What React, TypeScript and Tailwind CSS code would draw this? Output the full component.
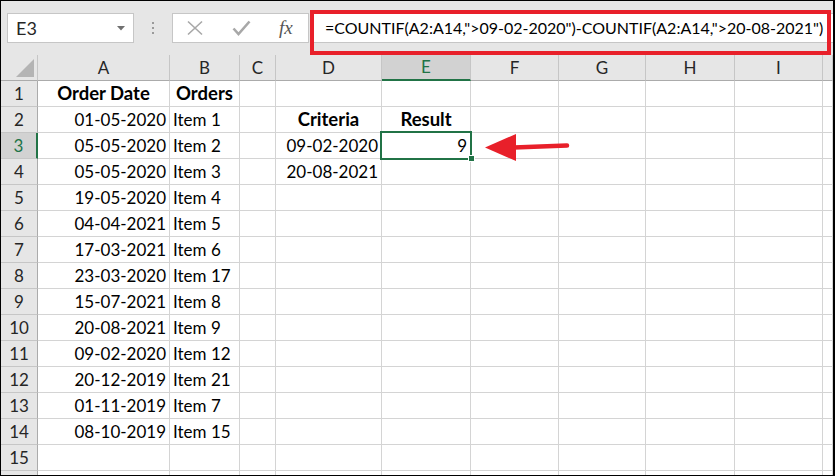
import React from "react";

const COLS = [
  "w-[37px]",
  "w-[132px]",
  "w-[70px]",
  "w-[36px]",
  "w-[106px]",
  "w-[89px]",
  "w-[88px]",
  "w-[87px]",
  "w-[89px]",
  "w-[88px]",
  "flex-1",
];
const LETTERS = ["A", "B", "C", "D", "E", "F", "G", "H", "I", ""];

type Cell = { t: string; b?: boolean; a?: "l" | "c" | "r" };

const ROWS: Record<number, Record<number, Cell>> = {
  1: { 1: { t: "Order Date", b: true, a: "c" }, 2: { t: "Orders", b: true, a: "c" } },
  2: { 1: { t: "01-05-2020", a: "r" }, 2: { t: "Item 1" }, 4: { t: "Criteria", b: true, a: "c" }, 5: { t: "Result", b: true, a: "c" } },
  3: { 1: { t: "05-05-2020", a: "r" }, 2: { t: "Item 2" }, 4: { t: "09-02-2020", a: "r" }, 5: { t: "9", a: "r" } },
  4: { 1: { t: "05-05-2020", a: "r" }, 2: { t: "Item 3" }, 4: { t: "20-08-2021", a: "r" } },
  5: { 1: { t: "19-05-2020", a: "r" }, 2: { t: "Item 4" } },
  6: { 1: { t: "04-04-2021", a: "r" }, 2: { t: "Item 5" } },
  7: { 1: { t: "17-03-2021", a: "r" }, 2: { t: "Item 6" } },
  8: { 1: { t: "23-03-2020", a: "r" }, 2: { t: "Item 17" } },
  9: { 1: { t: "15-07-2021", a: "r" }, 2: { t: "Item 8" } },
  10: { 1: { t: "20-08-2021", a: "r" }, 2: { t: "Item 9" } },
  11: { 1: { t: "09-02-2020", a: "r" }, 2: { t: "Item 12" } },
  12: { 1: { t: "20-12-2019", a: "r" }, 2: { t: "Item 21" } },
  13: { 1: { t: "01-11-2019", a: "r" }, 2: { t: "Item 7" } },
  14: { 1: { t: "08-10-2019", a: "r" }, 2: { t: "Item 15" } },
};

const FONT = { fontFamily: "Lato, 'Liberation Sans', sans-serif" };

function HeaderRow() {
  return (
    <div className="flex h-[26px]">
      <div className="w-[37px] h-[26px] bg-[#e6e6e6] border-r border-r-[#c6c6c6] border-b border-b-[#ababab] relative">
        <svg className="absolute right-[3px] bottom-[3px]" width="18" height="18" viewBox="0 0 18 18">
          <polygon points="18,0 18,18 0,18" fill="#b4b4b4" />
        </svg>
      </div>
      {LETTERS.map((l, i) => {
        const sel = l === "E";
        return (
          <div
            key={i}
            className={
              COLS[i + 1] +
              " h-[26px] flex items-center justify-center text-[17px] border-r border-r-[#c6c6c6] " +
              (sel
                ? "bg-[#d2d2d2] border-b-2 border-b-[#217346] text-[#217346]"
                : "bg-[#e6e6e6] border-b border-b-[#ababab] text-[#262626]")
            }
          >
            {l}
          </div>
        );
      })}
    </div>
  );
}

function Row({ n, label }: { n: number; label: boolean }) {
  const data = ROWS[n] || {};
  const sel = n === 3;
  return (
    <div className="flex h-[26px] shrink-0">
      <div
        className={
          "w-[37px] h-[26px] flex items-center justify-center text-[17px] border-b border-b-[#c6c6c6] " +
          (sel
            ? "bg-[#d2d2d2] border-r-2 border-r-[#217346] text-[#217346]"
            : "bg-[#e6e6e6] border-r border-r-[#ababab] text-[#262626]")
        }
      >
        {label ? n : ""}
      </div>
      {COLS.slice(1).map((c, i) => {
        const cell = data[i + 1];
        return (
          <div
            key={i}
            className={
              c +
              " h-[26px] border-r border-b border-[#d4d4d4] flex items-center px-[3px] pt-[1px] text-black whitespace-nowrap overflow-visible " +
              (cell?.a === "r" ? "justify-end" : cell?.a === "c" ? "justify-center" : "justify-start") +
              (cell?.b ? " font-bold text-[18.5px]" : " text-[17px]")
            }
          >
            {cell?.t}
          </div>
        );
      })}
    </div>
  );
}

export default function App() {
  return (
    <div
      className="w-[835px] h-[476px] border-l border-t border-b border-r-2 border-black overflow-hidden relative bg-white flex flex-col"
      style={FONT}
    >
      {/* Toolbar */}
      <div className="h-[54px] shrink-0 bg-[#e6e6e6] flex items-start pt-[12px] pl-[6px]">
        <div className="w-[127px] h-[30px] bg-white border border-[#c6c6c6] flex items-center pl-[8px] pr-[8px] text-[18px] text-[#262626]">
          <span className="flex-1">E3</span>
          <svg width="8" height="5" viewBox="0 0 8 5">
            <polygon points="0,0 8,0 4,4.5" fill="#707070" />
          </svg>
        </div>
        <div className="w-[38px] h-[30px] flex flex-col items-center justify-center gap-[3px]">
          <div className="w-[2px] h-[2px] bg-[#9a9a9a]" />
          <div className="w-[2px] h-[2px] bg-[#9a9a9a]" />
          <div className="w-[2px] h-[2px] bg-[#9a9a9a]" />
        </div>
        <div className="w-[137px] h-[30px] bg-white border border-[#c6c6c6] flex items-center">
          <svg className="ml-[13px]" width="19" height="16" viewBox="0 0 19 16">
            <path d="M2 1.5 L16 14.5 M16 1.5 L2 14.5" stroke="#a8a8a8" strokeWidth="1.6" fill="none" />
          </svg>
          <svg className="ml-[27px]" width="19" height="16" viewBox="0 0 19 16">
            <path d="M1.5 8.5 L6.5 14 L17.5 1.5" stroke="#a8a8a8" strokeWidth="2.6" fill="none" />
          </svg>
          <span
            className="ml-[28px] text-[19px] italic text-[#555]"
            style={{ fontFamily: "'Liberation Serif', serif" }}
          >
            fx
          </span>
        </div>
        <div className="flex-1 ml-[2px] h-[30px] bg-white border-t border-b border-l border-[#c6c6c6] flex items-center pl-[13px] text-[16px] text-black whitespace-nowrap overflow-hidden">
          =COUNTIF(A2:A14,"&gt;09-02-2020")-COUNTIF(A2:A14,"&gt;20-08-2021")
        </div>
      </div>

      {/* Grid */}
      <HeaderRow />
      {Array.from({ length: 16 }, (_, i) => (
        <Row key={i} n={i + 1} label={i < 15} />
      ))}

      {/* Red annotation box around the formula */}
      <div className="absolute left-[309px] top-[9px] w-[521px] h-[45px] border-4 border-[#e8202a] pointer-events-none" />

      {/* Selection on E3 */}
      <div className="absolute left-[379px] top-[130px] w-[92px] h-[29px] border-2 border-[#217346] pointer-events-none" />
      <div className="absolute left-[467px] top-[154px] w-[7px] h-[7px] bg-[#217346] border border-white pointer-events-none" />

      {/* Red arrow */}
      <svg className="absolute left-[483px] top-[131px]" width="90" height="30" viewBox="0 0 90 30">
        <path d="M30 15.5 L83 13.5" stroke="#e8202a" strokeWidth="4.5" strokeLinecap="round" />
        <polygon points="1,15.5 32,2 32,29" fill="#e8202a" />
      </svg>
    </div>
  );
}
